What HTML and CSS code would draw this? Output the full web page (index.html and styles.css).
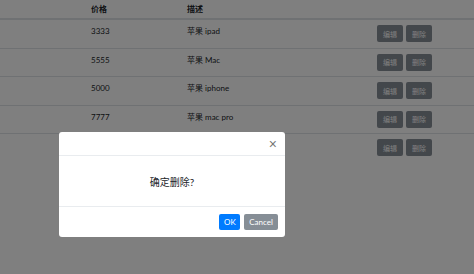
FILE: index.html
```html
<!DOCTYPE html>
<html lang="zh">
<head>
<meta charset="utf-8">
<title>商品列表</title>
<link rel="stylesheet" href="styles.css">
</head>
<body>
<table class="table">
  <colgroup>
    <col class="c1"><col class="c2"><col class="c3"><col class="c4">
  </colgroup>
  <thead>
    <tr><th></th><th>价格</th><th>描述</th><th></th></tr>
  </thead>
  <tbody>
    <tr><td></td><td>3333</td><td>苹果 ipad</td><td><div class="ops"><button class="btn">编辑</button><button class="btn">删除</button></div></td></tr>
    <tr><td></td><td>5555</td><td>苹果 Mac</td><td><div class="ops"><button class="btn">编辑</button><button class="btn">删除</button></div></td></tr>
    <tr><td></td><td>5000</td><td>苹果 iphone</td><td><div class="ops"><button class="btn">编辑</button><button class="btn">删除</button></div></td></tr>
    <tr><td></td><td>7777</td><td>苹果 mac pro</td><td><div class="ops"><button class="btn">编辑</button><button class="btn">删除</button></div></td></tr>
    <tr><td></td><td>8888</td><td>苹果 watch</td><td><div class="ops"><button class="btn">编辑</button><button class="btn">删除</button></div></td></tr>
  </tbody>
</table>

<div class="backdrop"></div>
<div class="modal">
  <div class="modal-header"><span class="close">×</span></div>
  <div class="modal-body">确定删除?</div>
  <div class="modal-footer">
    <button class="mbtn ok">OK</button>
    <button class="mbtn cancel">Cancel</button>
  </div>
</div>
</body>
</html>
```

FILE: styles.css
```css
html, body {
  margin: 0;
  padding: 0;
  background: #fff;
  font-family: Lato, "Noto Sans CJK SC", sans-serif;
  color: #212529;
  font-size: 8px;
  overflow: hidden;
}

.table {
  width: 474px;
  border-collapse: collapse;
  table-layout: fixed;
}
.c1 { width: 85px; }
.c2 { width: 96px; }
.c3 { width: 190px; }
.c4 { width: 103px; }

.table th {
  text-align: left;
  font-weight: 700;
  line-height: 12px;
  padding: 3px 6px;
  border-bottom: 2px solid #dee2e6;
}
.table td {
  line-height: 12px;
  padding: 5.25px 6px;
  vertical-align: top;
  border-bottom: 1px solid #dee2e6;
}
.table tbody tr:last-child td {
  border-bottom: none;
}

.ops {
  display: flex;
  gap: 3px;
}
.btn {
  height: 17px;
  width: 26px;
  padding: 0;
  border: none;
  border-radius: 2px;
  background: #868e96;
  color: #fff;
  font-family: inherit;
  font-size: 7px;
}

.backdrop {
  position: fixed;
  inset: 0;
  background: rgba(0, 0, 0, 0.5);
}

.modal {
  position: fixed;
  left: 59px;
  top: 132px;
  width: 226px;
  background: #fff;
  border-radius: 3px;
  display: flex;
  flex-direction: column;
}
.modal-header {
  height: 24px;
  box-sizing: border-box;
  border-bottom: 1px solid #e9ecef;
  display: flex;
  justify-content: flex-end;
  align-items: center;
  padding: 0 8px;
}
.close {
  font-size: 14px;
  line-height: 12px;
  color: #000;
  opacity: 0.55;
  font-family: "Liberation Sans", sans-serif;
}
.modal-body {
  height: 50px;
  display: flex;
  align-items: center;
  justify-content: center;
  font-size: 10px;
  color: #212529;
}
.modal-footer {
  height: 31px;
  box-sizing: border-box;
  border-top: 1px solid #e9ecef;
  display: flex;
  justify-content: flex-end;
  align-items: center;
  gap: 4px;
  padding: 0 7px;
}
.mbtn {
  height: 16px;
  padding: 0 5px;
  border: none;
  border-radius: 2px;
  color: #fff;
  font-family: inherit;
  font-size: 8px;
}
.ok { background: #007bff; width: 21px; }
.cancel { background: #868e96; width: 34px; }
```
